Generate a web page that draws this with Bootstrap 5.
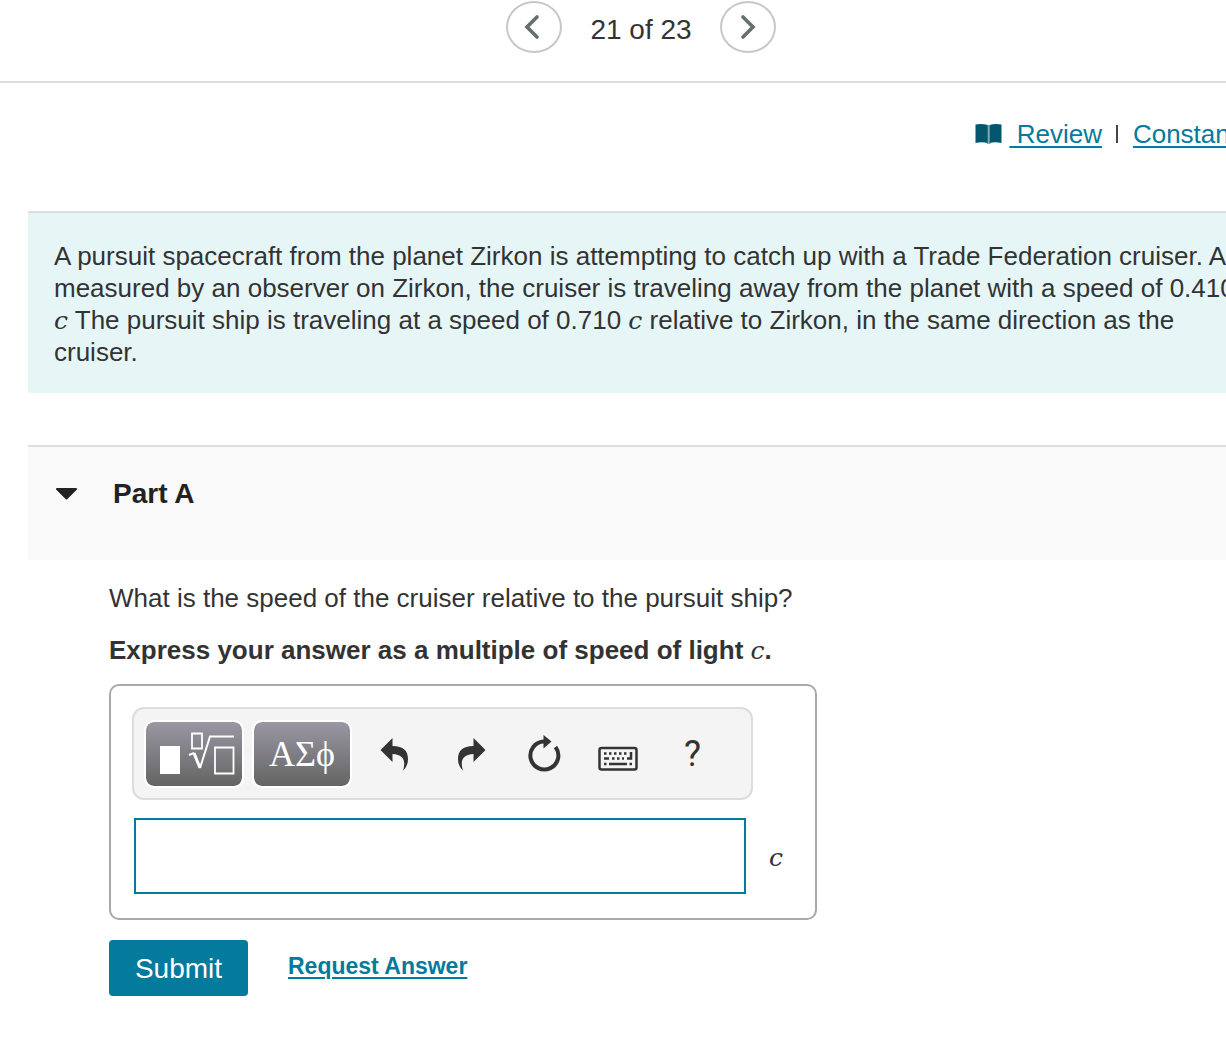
<!DOCTYPE html>
<html lang="en">
<head>
<meta charset="utf-8">
<meta name="viewport" content="width=device-width, initial-scale=1">
<title>Item 21 of 23</title>
<link href="https://cdn.jsdelivr.net/npm/bootstrap@5.3.0/dist/css/bootstrap.min.css" rel="stylesheet">
<style>
:root { --teal: #047a9c; --rule: #dedede; }
body { font-family: "Liberation Sans", Arial, sans-serif; font-size: 26px; line-height: 32px; color: #333; background: #fff; overflow-x: hidden; }
/* the sheet runs wider than the window and is clipped at its right edge */
.sheet { width: calc(100% + 56px); }
.pager { height: 83px; border-bottom: 2px solid var(--rule); padding-top: 1px; gap: 28px; font-size: 28px; }
.pager-btn { width: 56px; height: 52px; border: 2px solid #c7c7c7; border-radius: 50%; background: #fff; }
.pager-count { padding-top: 13px; }
.sheet a { color: var(--teal); text-underline-offset: 3px; text-decoration-thickness: 2px; }
.tools { padding: 35px 4px 61px 0; }
.tools .divider { width: 2px; height: 18px; background: #444; margin: 0 15px 0 14px; }
.book { margin-right: 7px; }
.intro { background: #e6f6f7; border-top: 2px solid var(--rule); padding: 27px 10px 25px 26px; }
.var-c { font: italic 25px/24px "DejaVu Serif", serif; }
.part-head { margin-top: 52px; background: #f9f9f9; border-top: 2px solid var(--rule); padding: 27px 28px 46px; gap: 36px; }
.part-head h2 { font-size: 28px; line-height: 40px; font-weight: 700; color: #222; }
.part-body { padding: 22px 81px 44px; }
.part-body p { margin-bottom: 20px; }
.part-body p.hint { margin-bottom: 18px; }
.answer { max-width: 708px; border: 2px solid #a9a9a9; border-radius: 10px; padding: 21px 21px 24px; }
.toolbar { max-width: 621px; border: 2px solid #dcdcdc; border-radius: 12px; background: #f4f4f4; padding: 11px 10px 10px; margin-bottom: 18px; }
.fn-btn { width: 100px; height: 68px; border: 2px solid #fff; border-radius: 10px; background: linear-gradient(#9a97a3, #646464); background-clip: padding-box; color: #fff; font: 36px/60px "Liberation Serif", serif; padding: 0; }
.fn-btn + .fn-btn { margin: 0 5px 0 8px; }
.icon-btn { width: 75px; height: 68px; border: 0; padding: 0; background: transparent; color: #333; font: 36px/64px Roboto, sans-serif; }
.icon-btn.help { padding-right: 4px; }
.entry { width: 612px; height: 76px; border: 2px solid var(--teal); border-radius: 0; margin-left: 2px; font-size: 28px; }
.unit { margin-left: 23px; padding-top: 4px; }
.submit-btn { background: var(--teal); color: #fff; width: 139px; height: 56px; border: 0; border-radius: 4px; font-size: 28px; padding: 2px 0 0; }
.submit-btn:hover { background: #036582; color: #fff; }
.request { font-size: 23px; font-weight: 700; padding-bottom: 4px; }
</style>
</head>
<body>
<div class="sheet">
  <header>
    <nav class="pager d-flex justify-content-center align-items-start" aria-label="Items">
      <button class="pager-btn d-flex align-items-center justify-content-center p-0" type="button" aria-label="Previous item">
        <svg width="24" height="28" viewBox="0 0 24 28" fill="none" stroke="#666e70" stroke-width="3.6" stroke-linecap="round"><path d="M15 4 5 14 15 24"/></svg>
      </button>
      <span class="pager-count">21 of 23</span>
      <button class="pager-btn d-flex align-items-center justify-content-center p-0" type="button" aria-label="Next item">
        <svg width="24" height="28" viewBox="0 0 24 28" fill="none" stroke="#666e70" stroke-width="3.6" stroke-linecap="round"><path d="M7 4 17 14 7 24"/></svg>
      </button>
    </nav>
  </header>
  <main class="px-4 mx-1">
    <div class="tools d-flex justify-content-end align-items-center">
      <svg class="book" width="27" height="22" viewBox="0 0 27 22"><path fill="#7fabb5" d="M12 2h3.500v19h-3.500z"/><path fill="#04566c" d="M.500 1.500Q7 .5 12.700 2V20Q7 18.500 .5 20ZM14.700 2Q20 .5 26.500 1.500V20Q20 18.500 14.700 20Z"/></svg>
      <a href="#review">&nbsp;Review</a>
      <span class="divider"></span>
      <a href="#constants">Constants</a>
    </div>
    <section class="intro">
      A pursuit spacecraft from the planet Zirkon is attempting to catch up with a Trade Federation cruiser. As measured by an observer on Zirkon, the cruiser is traveling away from the planet with a speed of 0.410 <span class="var-c">c</span> The pursuit ship is traveling at a speed of 0.710 <span class="var-c">c</span> relative to Zirkon, in the same direction as the cruiser.
    </section>
    <section>
      <div class="part-head d-flex align-items-center">
        <svg width="21" height="13" viewBox="0 0 21 13"><path fill="#222" stroke="#222" stroke-width="2" stroke-linejoin="round" d="M1 1h19L10.500 10.500Z"/></svg>
        <h2 class="m-0">Part A</h2>
      </div>
      <form class="part-body">
        <p>What is the speed of the cruiser relative to the pursuit ship?</p>
        <p class="hint fw-bold"><label for="answer">Express your answer as a multiple of speed of light <span class="var-c">c</span>.</label></p>
        <div class="answer">
          <div class="toolbar d-flex align-items-center">
            <button class="fn-btn" type="button" aria-label="Templates">
              <svg class="d-block" width="96" height="64" viewBox="0 0 96 64" fill="none" stroke="#fff"><path fill="#fff" stroke="none" d="M14 24h20v28H14z"/><path stroke-width="1.800" d="M46 11.500h10v15H46zM69 25.500h18.500v26H69z"/><path stroke-width="2" d="M43 33l5-2"/><path stroke-width="3" d="M48 31l6 15"/><path stroke-width="2" d="M54 46l10-31.500h24"/></svg>
            </button>
            <button class="fn-btn" type="button" aria-label="Greek letters">ΑΣϕ</button>
            <button class="icon-btn" type="button" aria-label="Undo">
              <svg class="d-block" width="75" height="64" viewBox="0 0 75 64"><path fill="#333" d="M23.500 28 35.500 16v8c11 0 15.500 5 15.500 13q0 7-5 11.500c3-9 1-16-10.500-16.500v8Z"/></svg>
            </button>
            <button class="icon-btn" type="button" aria-label="Redo">
              <svg class="d-block" width="75" height="64" viewBox="0 0 75 64"><path fill="#333" d="M53.500 28 41.500 16v8c-11 0-15.500 5-15.500 13q0 7 5 11.500c-3-9-1-16 10.500-16.500v8Z"/></svg>
            </button>
            <button class="icon-btn" type="button" aria-label="Reset">
              <svg class="d-block" width="75" height="64" viewBox="0 0 75 64"><path fill="none" stroke="#333" stroke-width="4" d="M48.500 25A14 14 0 1 1 37 19.500"/><path fill="#333" d="M36.500 13l8 6.500-8 7Z"/></svg>
            </button>
            <button class="icon-btn" type="button" aria-label="Keyboard shortcuts">
              <svg class="d-block" width="75" height="64" viewBox="0 0 75 64" fill="none" stroke="#333"><rect x="17.500" y="26" width="37" height="21.500" rx="2" stroke-width="2.500"/><path stroke-width="2.500" stroke-dasharray="2.500 2.500" d="M22 31.500h23"/><path stroke-width="2.500" stroke-dasharray="5 3 2.500 2.500 2.500 2.500 2.500 2.500" d="M22 36.500h20"/><path stroke-width="2.500" d="M45 36.500h4v-6.500M22 42h2.500M27 42h18M47.500 42H50"/></svg>
            </button>
            <button class="icon-btn help" type="button" aria-label="Help">?</button>
          </div>
          <div class="d-flex align-items-center">
            <input class="entry form-control" type="text" id="answer" autocomplete="off">
            <span class="unit var-c">c</span>
          </div>
        </div>
        <div class="d-flex align-items-center mt-3 pt-1">
          <button class="submit-btn btn" type="submit">Submit</button>
          <a class="request ms-3 ps-4" href="#request">Request Answer</a>
        </div>
      </form>
    </section>
  </main>
</div>
<script src="https://cdn.jsdelivr.net/npm/bootstrap@5.3.0/dist/js/bootstrap.bundle.min.js"></script>
</body>
</html>
